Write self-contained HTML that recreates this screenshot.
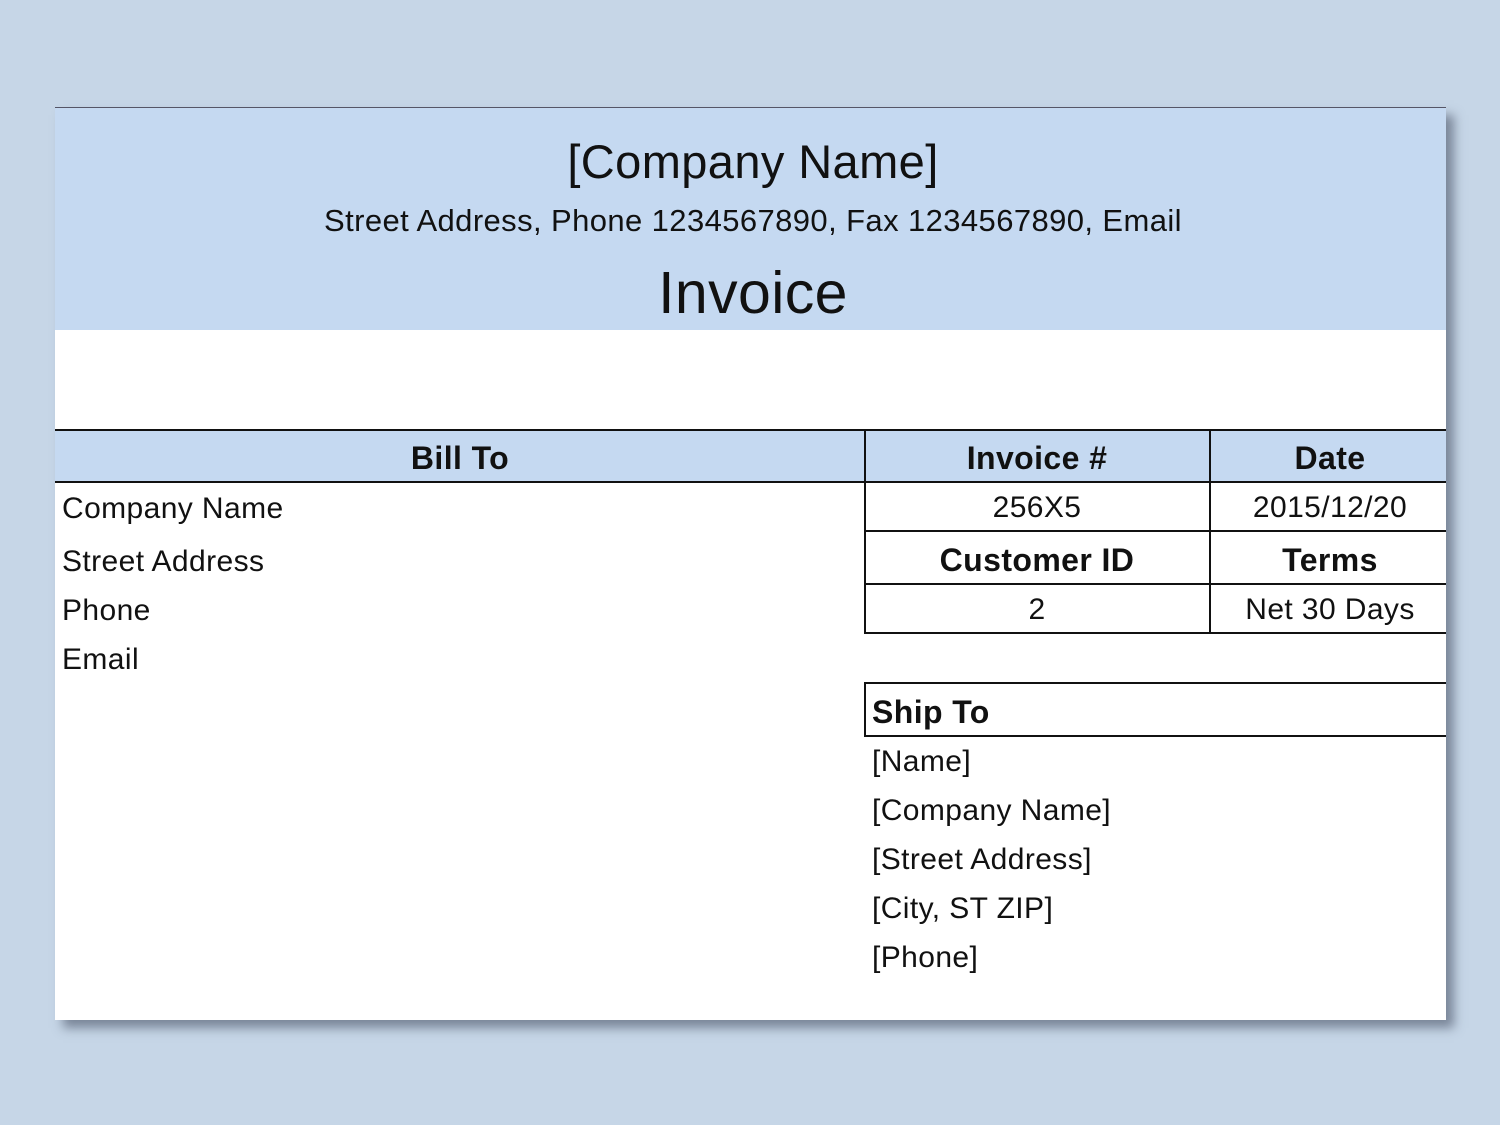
<!DOCTYPE html>
<html><head><meta charset="utf-8"><style>
html,body{margin:0;padding:0}
body{width:1500px;height:1125px;background:#c6d6e7;position:relative;overflow:hidden;font-family:"Liberation Sans",sans-serif;color:#111}
.sheet{position:absolute;left:55px;top:107px;width:1391px;height:912px;background:#fff;box-shadow:8px 8px 10px rgba(60,70,90,.55);border-top:1px solid #556}
.hdr{position:absolute;left:0;top:0;width:1391px;height:222px;background:#c5d9f1}
.t{position:absolute;white-space:nowrap;line-height:1;letter-spacing:0.4px}
.c{transform:translateX(-50%)}
.h{position:absolute;background:#111;height:2px}
.v{position:absolute;background:#111;width:2px}
.blue{position:absolute;background:#c5d9f1}
b{font-weight:bold}
.n{font-size:30px}
.bb{font-size:32px}
</style></head><body>
<div class="sheet">
<div class="hdr"></div>
<div class="t c" style="left:698px;top:30px;font-size:47px">[Company Name]</div>
<div class="t c" style="left:698px;top:97px;font-size:31px">Street Address, Phone 1234567890, Fax 1234567890, Email</div>
<div class="t c" style="left:698px;top:156px;font-size:59px">Invoice</div>

<div class="blue" style="left:0;top:322px;width:1391px;height:52px"></div>
<div class="h" style="left:0;top:321px;width:1391px"></div>
<div class="h" style="left:0;top:373px;width:1391px"></div>
<div class="v" style="left:809px;top:321px;height:205px"></div>
<div class="v" style="left:1154px;top:321px;height:205px"></div>
<div class="h" style="left:809px;top:422px;width:582px"></div>
<div class="h" style="left:809px;top:475px;width:582px"></div>
<div class="h" style="left:809px;top:524px;width:582px"></div>

<div class="t c bb" style="left:405px;top:334px"><b>Bill To</b></div>
<div class="t c bb" style="left:982px;top:334px"><b>Invoice #</b></div>
<div class="t c bb" style="left:1275px;top:334px"><b>Date</b></div>
<div class="t c n" style="left:982px;top:385px">256X5</div>
<div class="t c n" style="left:1275px;top:385px">2015/12/20</div>
<div class="t c bb" style="left:982px;top:436px"><b>Customer ID</b></div>
<div class="t c bb" style="left:1275px;top:436px"><b>Terms</b></div>
<div class="t c n" style="left:982px;top:487px">2</div>
<div class="t c n" style="left:1275px;top:487px">Net 30 Days</div>

<div class="t n" style="left:7px;top:386px">Company Name</div>
<div class="t n" style="left:7px;top:439px">Street Address</div>
<div class="t n" style="left:7px;top:488px">Phone</div>
<div class="t n" style="left:7px;top:537px">Email</div>

<div class="h" style="left:809px;top:574px;width:582px"></div>
<div class="h" style="left:809px;top:627px;width:582px"></div>
<div class="v" style="left:809px;top:574px;height:55px"></div>
<div class="t bb" style="left:817px;top:588px"><b>Ship To</b></div>
<div class="t n" style="left:817px;top:639px">[Name]</div>
<div class="t n" style="left:817px;top:688px">[Company Name]</div>
<div class="t n" style="left:817px;top:737px">[Street Address]</div>
<div class="t n" style="left:817px;top:786px">[City, ST ZIP]</div>
<div class="t n" style="left:817px;top:835px">[Phone]</div>
</div>
</body></html>
